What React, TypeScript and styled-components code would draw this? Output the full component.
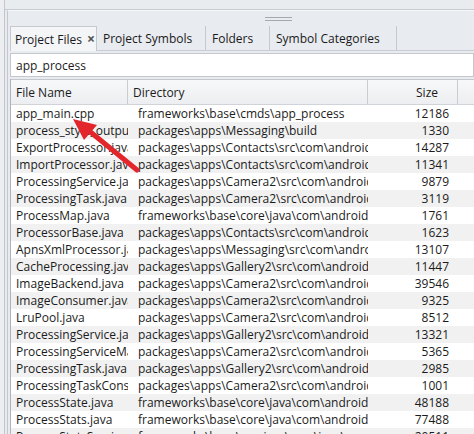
import React from 'react';
import styled, { createGlobalStyle } from 'styled-components';

interface FileRow {
  name: string;
  dir: string;
  size: number;
}

const rows: FileRow[] = [
  { name: 'app_main.cpp', dir: 'frameworks\\base\\cmds\\app_process', size: 12186 },
  { name: 'process_style_output.txt', dir: 'packages\\apps\\Messaging\\build', size: 1330 },
  { name: 'ExportProcessor.java', dir: 'packages\\apps\\Contacts\\src\\com\\android\\contacts', size: 14287 },
  { name: 'ImportProcessor.java', dir: 'packages\\apps\\Contacts\\src\\com\\android\\contacts', size: 11341 },
  { name: 'ProcessingService.java', dir: 'packages\\apps\\Camera2\\src\\com\\android\\camera', size: 9879 },
  { name: 'ProcessingTask.java', dir: 'packages\\apps\\Camera2\\src\\com\\android\\camera', size: 3119 },
  { name: 'ProcessMap.java', dir: 'frameworks\\base\\core\\java\\com\\android\\internal', size: 1761 },
  { name: 'ProcessorBase.java', dir: 'packages\\apps\\Contacts\\src\\com\\android\\contacts', size: 1623 },
  { name: 'ApnsXmlProcessor.java', dir: 'packages\\apps\\Messaging\\src\\com\\android\\messaging', size: 13107 },
  { name: 'CacheProcessing.java', dir: 'packages\\apps\\Gallery2\\src\\com\\android\\gallery3d', size: 11447 },
  { name: 'ImageBackend.java', dir: 'packages\\apps\\Camera2\\src\\com\\android\\camera', size: 39546 },
  { name: 'ImageConsumer.java', dir: 'packages\\apps\\Camera2\\src\\com\\android\\camera', size: 9325 },
  { name: 'LruPool.java', dir: 'packages\\apps\\Camera2\\src\\com\\android\\camera', size: 8512 },
  { name: 'ProcessingService.java', dir: 'packages\\apps\\Gallery2\\src\\com\\android\\gallery3d', size: 13321 },
  { name: 'ProcessingServiceManager.java', dir: 'packages\\apps\\Camera2\\src\\com\\android\\camera', size: 5365 },
  { name: 'ProcessingTask.java', dir: 'packages\\apps\\Gallery2\\src\\com\\android\\gallery3d', size: 2985 },
  { name: 'ProcessingTaskConsumer.java', dir: 'packages\\apps\\Camera2\\src\\com\\android\\camera', size: 1001 },
  { name: 'ProcessState.java', dir: 'frameworks\\base\\core\\java\\com\\android\\internal', size: 48188 },
  { name: 'ProcessStats.java', dir: 'frameworks\\base\\core\\java\\com\\android\\internal', size: 77488 },
  { name: 'ProcessStatsService.java', dir: 'frameworks\\base\\services\\core\\java\\com\\android', size: 20511 },
];

const tabs = [
  { label: 'Project Files', width: 87 },
  { label: 'Project Symbols', width: 109 },
  { label: 'Folders', width: 64 },
  { label: 'Symbol Categories', width: 127 },
];

const App: React.FC = () => {
  return (
    <>
      <GlobalStyle />
      <Window>
        <LeftStrip />
        <Main>
          <TopBand />
          <Panel>
            <PanelHeader>
              <Grip />
            </PanelHeader>
            <TabBar>
              {tabs.map((t, i) => (
                <Tab key={t.label} $active={i === 0} $w={t.width}>
                  {t.label}
                  {i === 0 && <Close>×</Close>}
                </Tab>
              ))}
            </TabBar>
            <Search value="app_process" readOnly />
            <Table>
              <HeaderRow>
                <HeadCell>File Name</HeadCell>
                <HeadCell>Directory</HeadCell>
                <HeadCell $right>Size</HeadCell>
                <HeadCell />
              </HeaderRow>
              {rows.map((r, i) => (
                <Row key={i} $odd={i % 2 === 1}>
                  <Cell>{r.name}</Cell>
                  <Cell $dir>{r.dir}</Cell>
                  <Cell $right>{r.size}</Cell>
                  <Cell />
                </Row>
              ))}
            </Table>
          </Panel>
        </Main>
        <Arrow width="474" height="434" viewBox="0 0 474 434">
          <line x1="137" y1="170" x2="88" y2="130" stroke="#e3262b" strokeWidth="5" strokeLinecap="round" />
          <polygon points="73,119 97,125 84,140" fill="#e3262b" />
        </Arrow>
      </Window>
    </>
  );
};

export default App;

const GlobalStyle = createGlobalStyle`
  html, body {
    margin: 0;
    padding: 0;
    background: #e7eaee;
    overflow: hidden;
  }
  body {
    font-family: 'Open Sans', 'Noto Sans', sans-serif;
    font-size: 12px;
    color: #1b1b1b;
  }
`;

const Window = styled.div`
  position: relative;
  width: 474px;
  height: 434px;
  display: flex;
  overflow: hidden;
`;

const LeftStrip = styled.div`
  width: 4px;
  flex: none;
  background: #eceef1;
  border-right: 1px solid #c3c7cc;
`;

const Main = styled.div`
  flex: 1;
  display: flex;
  flex-direction: column;
  min-width: 0;
`;

const TopBand = styled.div`
  height: 9px;
  flex: none;
  background: #e9ecef;
  border-bottom: 1px solid #c7cbd0;
`;

const Panel = styled.div`
  flex: 1;
  margin-left: 2px;
  border-left: 1px solid #c4c8cd;
  border-top: 1px solid #f6f7f8;
  background: #e8ebef;
  display: flex;
  flex-direction: column;
  padding-left: 2px;
`;

const PanelHeader = styled.div`
  height: 15px;
  flex: none;
  display: flex;
  align-items: center;
  padding-left: 255px;
`;

const Grip = styled.div`
  width: 27px;
  height: 2px;
  border-top: 1px solid #a4a9af;
  border-bottom: 1px solid #a4a9af;
`;

const TabBar = styled.div`
  height: 24px;
  flex: none;
  display: flex;
  align-items: stretch;
  border-bottom: 1px solid #c9cdd2;
`;

const Tab = styled.div<{ $active?: boolean; $w: number }>`
  box-sizing: border-box;
  width: ${(p) => p.$w}px;
  display: flex;
  align-items: center;
  gap: 5px;
  padding: 0 0 0 ${(p) => (p.$active ? 4 : 6)}px;
  font-size: 12px;
  color: #1a1a1a;
  background: ${(p) => (p.$active ? '#f4f5f7' : '#e8ebef')};
  border-left: ${(p) => (p.$active ? '1px solid #c6cacf' : 'none')};
  border-right: 1px solid #c6cacf;
  border-top: ${(p) => (p.$active ? '1px solid #c6cacf' : 'none')};
  margin-bottom: ${(p) => (p.$active ? '-1px' : '0')};
`;

const Close = styled.span`
  font-size: 14px;
  color: #555;
  font-weight: bold;
  line-height: 1;
`;

const Search = styled.input`
  margin: 2px 0 0 0;
  height: 24px;
  box-sizing: border-box;
  border: 1px solid #c4c8cd;
  background: #fff;
  padding: 0 5px;
  font-family: 'Open Sans', 'Noto Sans', sans-serif;
  font-size: 12px;
  color: #1b1b1b;
  outline: none;
`;

const Table = styled.div`
  margin-top: 2px;
  border-left: 1px solid #aeb3b9;
  background: #fff;
  flex: 1;
`;

const columns = '117px 240px 90px 1fr';

const HeaderRow = styled.div`
  display: grid;
  grid-template-columns: ${columns};
  height: 24px;
  background: linear-gradient(#f7f8f9, #eceef1);
  border-top: 1px solid #c4c8cd;
  border-bottom: 1px solid #d0d3d7;
`;

const HeadCell = styled.div<{ $right?: boolean }>`
  display: flex;
  align-items: center;
  justify-content: ${(p) => (p.$right ? 'flex-end' : 'flex-start')};
  padding: ${(p) => (p.$right ? '0 19px 0 0' : '0 0 0 5px')};
  border-right: 1px solid #c9ccd0;
  font-size: 12px;
  color: #1b1b1b;
  &:last-child {
    border-right: none;
  }
`;

const Row = styled.div<{ $odd?: boolean }>`
  display: grid;
  grid-template-columns: ${columns};
  height: 17px;
  background: ${(p) => (p.$odd ? '#f1f1f1' : '#ffffff')};
`;

const Cell = styled.div<{ $right?: boolean; $dir?: boolean }>`
  overflow: hidden;
  white-space: nowrap;
  line-height: 17px;
  font-size: 12px;
  text-align: ${(p) => (p.$right ? 'right' : 'left')};
  padding: ${(p) => (p.$right ? '0 9px 0 0' : p.$dir ? '0 0 0 10px' : '0 0 0 5px')};
`;

const Arrow = styled.svg`
  position: absolute;
  left: 0;
  top: 0;
  pointer-events: none;
`;
